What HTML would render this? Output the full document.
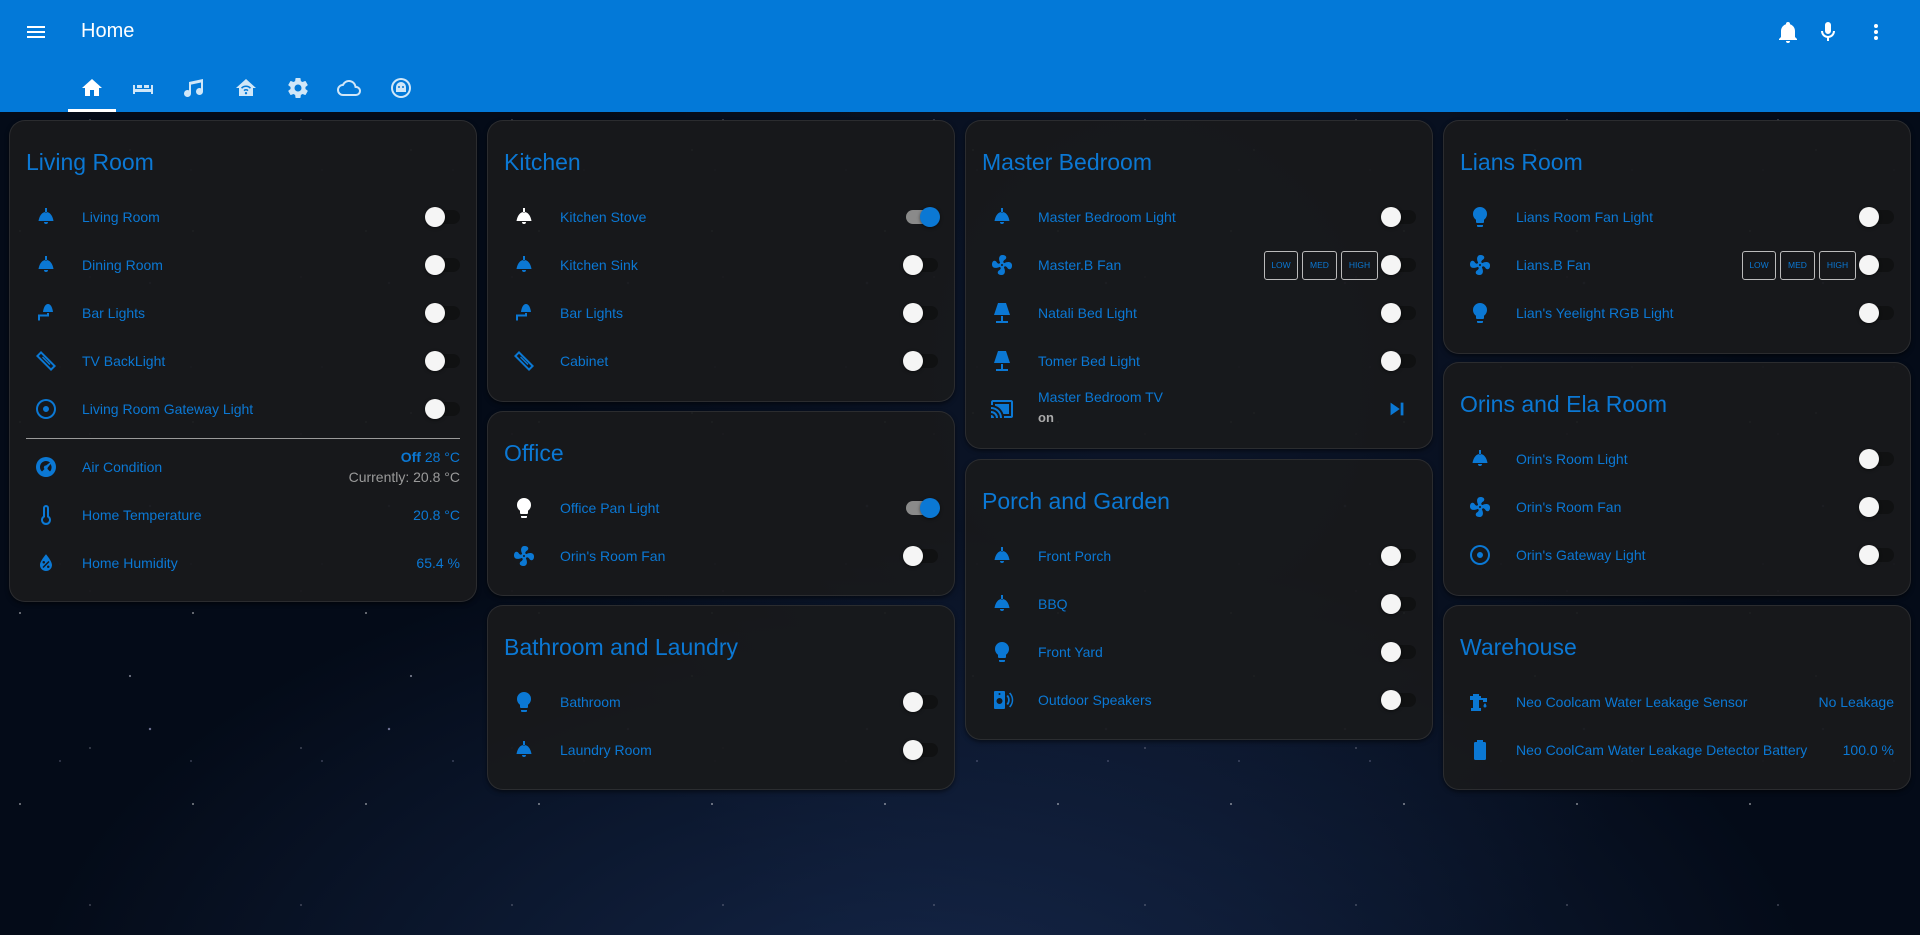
<!DOCTYPE html>
<html><head><meta charset="utf-8"><style>
*{box-sizing:border-box;margin:0;padding:0}
body{width:1920px;height:935px;overflow:hidden;font-family:"Liberation Sans",sans-serif;position:relative;
background:
radial-gradient(1.2px 1.2px at 20px 40px,#fff,transparent),
radial-gradient(1px 1px at 90px 120px,#aab,transparent),
radial-gradient(1.5px 1.5px at 150px 60px,#ccf,transparent),
radial-gradient(1px 1px at 60px 170px,#99b,transparent),
radial-gradient(1.3px 1.3px at 130px 150px,#eef,transparent),
radial-gradient(ellipse 900px 500px at 48% 110%,rgba(40,70,130,.45),transparent),
radial-gradient(ellipse 600px 700px at 60% 40%,rgba(30,45,80,.35),transparent),
#040b18;
background-size:173px 191px,211px 157px,239px 223px,131px 197px,281px 263px,100% 100%,100% 100%;}
.hdr{position:absolute;left:0;top:0;width:1920px;height:112px;background:#0379d8}
.hdr .t{position:absolute;left:81px;top:20px;color:#fff;font-size:20px}
.ic{position:absolute;fill:#fff}
.tab{position:absolute;top:76px;width:24px;height:24px;fill:rgba(255,255,255,.82)}
.ul{position:absolute;left:68px;top:109px;width:48px;height:3px;background:#fff}
.card{position:absolute;width:468px;background:rgba(24,25,27,.95);border:1px solid rgba(255,255,255,.09);border-radius:16px;box-shadow:0 2px 4px rgba(0,0,0,.5)}
.card h2{font-weight:normal;font-size:23px;color:#0b78d4;height:72px;line-height:82px;padding-left:16px}
.row{height:48px;position:relative;color:#0b78d4;font-size:14px}
.row svg{position:absolute;left:24px;top:12px;width:24px;height:24px;fill:#0b78d4}
.row .n{position:absolute;left:72px;top:0;line-height:48px;white-space:nowrap}
.row .v{position:absolute;right:16px;top:0;line-height:48px}
.tg{position:absolute;left:418px;top:17px;width:32px;height:14px;border-radius:7px;background:#101112}
.tg:after{content:"";position:absolute;left:-3px;top:-3px;width:20px;height:20px;border-radius:50%;background:#f5f5f5;box-shadow:0 1px 3px rgba(0,0,0,.5)}
.tg.on{background:#8a8a8a}.tg.on:after{left:14px;background:#0b78d4}
.fb{position:absolute;top:10px;height:29px;border:1px solid #bbb;border-radius:3px;font-size:8.5px;line-height:27px;text-align:center;color:#0b78d4}
.div{margin:5px 16px 4px;height:1px;background:#9a9a9a}
</style></head><body>
<div class="hdr">
<svg class="ic" style="left:24px;top:20px" width="24" height="24" viewBox="0 0 24 24"><path d="M3,6H21V8H3V6M3,11H21V13H3V11M3,16H21V18H3V16Z"/></svg>
<div class="t">Home</div>
<svg class="ic" style="left:1776px;top:20px" width="24" height="24" viewBox="0 0 24 24"><path d="M21,19V20H3V19L5,17V11C5,7.9 7.03,5.17 10,4.29C10,4.19 10,4.1 10,4A2,2 0 0,1 12,2A2,2 0 0,1 14,4C14,4.1 14,4.19 14,4.29C16.97,5.17 19,7.9 19,11V17L21,19M14,21A2,2 0 0,1 12,23A2,2 0 0,1 10,21"/></svg>
<svg class="ic" style="left:1816px;top:20px" width="24" height="24" viewBox="0 0 24 24"><path d="M12,2A3,3 0 0,1 15,5V11A3,3 0 0,1 12,14A3,3 0 0,1 9,11V5A3,3 0 0,1 12,2M19,11C19,14.53 16.39,17.44 13,17.930V21H11V17.93C7.61,17.44 5,14.53 5,11H7A5,5 0 0,0 12,16A5,5 0 0,0 17,11H19Z"/></svg>
<svg class="ic" style="left:1864px;top:20px" width="24" height="24" viewBox="0 0 24 24"><path d="M12,16A2,2 0 0,1 14,18A2,2 0 0,1 12,20A2,2 0 0,1 10,18A2,2 0 0,1 12,16M12,10A2,2 0 0,1 14,12A2,2 0 0,1 12,14A2,2 0 0,1 10,12A2,2 0 0,1 12,10M12,4A2,2 0 0,1 14,6A2,2 0 0,1 12,8A2,2 0 0,1 10,6A2,2 0 0,1 12,4Z"/></svg>
<svg class="tab" style="left:80px;fill:#fff" viewBox="0 0 24 24"><path d="M10,20V14H14V20H19V12H22L12,3L2,12H5V20H10Z"/></svg>
<svg class="tab" style="left:131px" viewBox="0 0 24 24"><path d="M2,9H4V13H20V9H22V18H20V16H4V18H2V9M6,9H11V12H6V9M13,9H18V12H13V9Z"/></svg>
<svg class="tab" style="left:182px" viewBox="0 0 24 24"><path d="M21,3V15.5A3.5,3.5 0 0,1 17.5,19A3.5,3.5 0 0,1 14,15.5A3.5,3.5 0 0,1 17.5,12C18.04,12 18.55,12.12 19,12.34V6.47L9,8.6V17.5A3.5,3.5 0 0,1 5.5,21A3.5,3.5 0 0,1 2,17.5A3.5,3.5 0 0,1 5.5,14C6.040,14 6.55,14.12 7,14.34V6L21,3Z"/></svg>
<svg class="tab" style="left:234px" viewBox="0 0 24 24"><path d="M12,3L2,12H5V20H19V12H22L12,3M12,9.5C14,9.5 15.8,10.3 17,11.6L15.9,12.7C14.9,11.6 13.5,11 12,11C10.5,11 9.1,11.6 8.1,12.7L7,11.6C8.2,10.3 10,9.5 12,9.5M12,13C13,13 13.9,13.4 14.5,14.1L13.4,15.2C13,14.8 12.5,14.5 12,14.5C11.5,14.5 11,14.8 10.6,15.2L9.5,14.1C10.1,13.4 11,13 12,13M12,16A1.2,1.2 0 0,1 13.2,17.2A1.2,1.2 0 0,1 12,18.4A1.2,1.2 0 0,1 10.8,17.2A1.2,1.2 0 0,1 12,16Z"/></svg>
<svg class="tab" style="left:286px" viewBox="0 0 24 24"><path d="M12,15.5A3.5,3.5 0 0,1 8.5,12A3.5,3.5 0 0,1 12,8.5A3.5,3.5 0 0,1 15.5,12A3.5,3.5 0 0,1 12,15.5M19.43,12.97C19.47,12.65 19.5,12.33 19.5,12C19.5,11.67 19.47,11.34 19.43,11L21.54,9.37C21.73,9.22 21.78,8.95 21.66,8.73L19.66,5.27C19.54,5.05 19.27,4.96 19.05,5.05L16.56,6.05C16.04,5.66 15.5,5.32 14.87,5.07L14.5,2.42C14.46,2.18 14.25,2 14,2H10C9.75,2 9.54,2.18 9.5,2.42L9.13,5.07C8.5,5.32 7.96,5.66 7.44,6.05L4.95,5.05C4.73,4.96 4.46,5.05 4.34,5.27L2.34,8.73C2.21,8.95 2.27,9.22 2.46,9.37L4.57,11C4.53,11.34 4.5,11.67 4.5,12C4.5,12.33 4.53,12.65 4.57,12.97L2.46,14.63C2.27,14.78 2.21,15.05 2.34,15.27L4.34,18.73C4.46,18.95 4.73,19.03 4.95,18.95L7.44,17.94C7.96,18.34 8.5,18.68 9.13,18.93L9.5,21.58C9.54,21.82 9.75,22 10,22H14C14.25,22 14.46,21.82 14.5,21.58L14.87,18.93C15.5,18.67 16.04,18.34 16.56,17.94L19.05,18.95C19.27,19.03 19.54,18.95 19.66,18.73L21.66,15.27C21.78,15.05 21.73,14.78 21.54,14.63L19.43,12.97Z"/></svg>
<svg class="tab" style="left:337px" viewBox="0 0 24 24"><path d="M19.35,10.03C18.67,6.59 15.64,4 12,4C9.11,4 6.6,5.64 5.35,8.03C2.34,8.36 0,10.9 0,14A6,6 0 0,0 6,20H19A5,5 0 0,0 24,15C24,12.36 21.95,10.22 19.35,10.03M19,18H6A4,4 0 0,1 2,14C2,11.95 3.53,10.24 5.56,10.03L6.63,9.92L7.13,8.97C8.08,7.14 9.94,6 12,6C14.62,6 16.88,7.86 17.39,10.43L17.69,11.93L19.22,12.04C20.78,12.14 22,13.45 22,15A3,3 0 0,1 19,18Z"/></svg>
<svg class="tab" style="left:389px" viewBox="0 0 24 24"><path d="M12,2A10,10 0 0,1 22,12A10,10 0 0,1 12,22A10,10 0 0,1 2,12A10,10 0 0,1 12,2M12,4A8,8 0 0,0 4,12A8,8 0 0,0 12,20A8,8 0 0,0 20,12A8,8 0 0,0 12,4M12,6A5,5 0 0,1 17,11V16H7V11A5,5 0 0,1 12,6M10,10A1,1 0 0,0 9,11A1,1 0 0,0 10,12A1,1 0 0,0 11,11A1,1 0 0,0 10,10M14,10A1,1 0 0,0 13,11A1,1 0 0,0 14,12A1,1 0 0,0 15,11A1,1 0 0,0 14,10Z"/></svg>
<div class="ul"></div>
</div>

<svg width="0" height="0" style="position:absolute"><defs>
<symbol id="cl" viewBox="0 0 24 24"><path d="M11,3H13V7.5H11Z M12,7C8,7 5.5,10.5 4.5,16H19.5C18.5,10.5 16,7 12,7Z M10,17H14A2,2 0 0,1 10,17Z"/></symbol>
<symbol id="wl" viewBox="0 0 24 24"><path d="M14,3C11,3 9.5,7 9,11H19C18.5,7 17,3 14,3Z M13,12H15V15.5H6V19.5H4V13.5H6V13.5H13Z"/></symbol>
<symbol id="strip" viewBox="0 0 24 24"><path d="M7,2L22,17L17,22L2,7L7,2M7,4.8L4.8,7L17,19.2L19.2,17L7,4.8M8,8.5L9,7.5L16.5,15L15.5,16Z"/></symbol>
<symbol id="gw" viewBox="0 0 24 24"><path d="M12,2A10,10 0 0,1 22,12A10,10 0 0,1 12,22A10,10 0 0,1 2,12A10,10 0 0,1 12,2M12,4A8,8 0 0,0 4,12A8,8 0 0,0 12,20A8,8 0 0,0 20,12A8,8 0 0,0 12,4M12,9A3,3 0 0,1 15,12A3,3 0 0,1 12,15A3,3 0 0,1 9,12A3,3 0 0,1 12,9Z"/></symbol>
<symbol id="ac" viewBox="0 0 24 24"><path d="M12,2A10,10 0 0,1 22,12A10,10 0 0,1 12,22A10,10 0 0,1 2,12A10,10 0 0,1 12,2M12,6A6,6 0 0,0 6,12A6,6 0 0,0 8,16.5L10.5,14A2,2 0 0,1 12,10.5L16,7.5A6,6 0 0,0 12,6M16.5,9L13.5,13A2,2 0 0,1 13.5,14L16,16.5A6,6 0 0,0 16.5,9Z"/></symbol>
<symbol id="th" viewBox="0 0 24 24"><path d="M15,13V5A3,3 0 0,0 9,5V13A5,5 0 1,0 15,13M12,4A1,1 0 0,1 13,5V14.1A3,3 0 1,1 11,14.1V5A1,1 0 0,1 12,4Z"/></symbol>
<symbol id="hu" viewBox="0 0 24 24"><path d="M12,3.25C12,3.25 6,10 6,14C6,17.32 8.69,20 12,20A6,6 0 0,0 18,14C18,10 12,3.25 12,3.25M14.47,9.97L15.53,11.03L9.53,17.03L8.47,15.97M9.75,10A1.25,1.25 0 0,1 11,11.25A1.25,1.25 0 0,1 9.75,12.5A1.25,1.25 0 0,1 8.5,11.25A1.25,1.25 0 0,1 9.75,10M14.25,14.5A1.25,1.25 0 0,1 15.5,15.75A1.25,1.25 0 0,1 14.25,17A1.25,1.25 0 0,1 13,15.75A1.25,1.25 0 0,1 14.25,14.5Z"/></symbol>
<symbol id="fan" viewBox="0 0 24 24"><path d="M12,11A1,1 0 0,0 11,12A1,1 0 0,0 12,13A1,1 0 0,0 13,12A1,1 0 0,0 12,11M12.5,2C17,2 17.11,5.57 14.75,6.75C13.76,7.24 13.32,8.29 13.13,9.22C13.61,9.42 14.03,9.73 14.35,10.13C18.05,8.13 22.03,8.92 22.03,12.5C22.03,17 18.46,17.1 17.28,14.73C16.78,13.74 15.72,13.3 14.79,13.11C14.59,13.59 14.28,14 13.88,14.34C15.87,18.03 15.08,22 11.5,22C7,22 6.91,18.42 9.27,17.24C10.25,16.75 10.69,15.71 10.89,14.79C10.4,14.59 9.97,14.27 9.65,13.87C5.96,15.85 2,15.07 2,11.5C2,7 5.56,6.89 6.74,9.26C7.24,10.25 8.29,10.68 9.22,10.87C9.41,10.39 9.73,9.97 10.14,9.65C8.15,5.96 8.94,2 12.5,2Z"/></symbol>
<symbol id="bulb" viewBox="0 0 24 24"><path d="M12,2A7,7 0 0,0 5,9C5,11.38 6.19,13.47 8,14.74V17A1,1 0 0,0 9,18H15A1,1 0 0,0 16,17V14.74C17.81,13.47 19,11.38 19,9A7,7 0 0,0 12,2M9,21A1,1 0 0,0 10,22H14A1,1 0 0,0 15,21V20H9V21Z"/></symbol>
<symbol id="lamp" viewBox="0 0 24 24"><path d="M8,2H16L20,14H4L8,2M11,15H13V20H18V22H6V20H11V15Z"/></symbol>
<symbol id="cast" viewBox="0 0 24 24"><path d="M21,3H3C1.9,3 1,3.9 1,5V8H3V5H21V19H14V21H21A2,2 0 0,0 23,19V5C23,3.9 22.1,3 21,3M1,10V12A9,9 0 0,1 10,21H12C12,14.92 7.07,10 1,10M19,7H5V8.63C8.96,9.91 12.09,13.04 13.37,17H19M1,14V16A5,5 0 0,1 6,21H8A7,7 0 0,0 1,14M1,18V21H4A3,3 0 0,0 1,18Z"/></symbol>
<symbol id="spk" viewBox="0 0 24 24"><path d="M5,3H14A1,1 0 0,1 15,4V20A1,1 0 0,1 14,21H5A1,1 0 0,1 4,20V4A1,1 0 0,1 5,3M9.5,5A1,1 0 0,0 8.5,6A1,1 0 0,0 9.5,7A1,1 0 0,0 10.5,6A1,1 0 0,0 9.5,5M9.5,10A3,3 0 0,0 6.5,13A3,3 0 0,0 9.5,16A3,3 0 0,0 12.5,13A3,3 0 0,0 9.5,10M16.5,8L18,7A8,8 0 0,1 18,17L16.5,16A6,6 0 0,0 16.5,8M19,5.5L20.3,4.5A11,11 0 0,1 20.3,19.5L19,18.5A9,9 0 0,0 19,5.5Z"/></symbol>
<symbol id="pipe" viewBox="0 0 24 24"><path d="M5,4H11V6H13V8H19V12H15V10H11V18H13V21H3V18H5V10H2V6H5Z M17,13C17,13 18.5,15 18.5,16A1.5,1.5 0 0,1 15.5,16C15.5,15 17,13 17,13Z"/></symbol>
<symbol id="bat" viewBox="0 0 24 24"><path d="M16.67,4H15V2H9V4H7.33A1.33,1.33 0 0,0 6,5.33V20.67C6,21.4 6.6,22 7.33,22H16.67A1.33,1.33 0 0,0 18,20.67V5.33C18,4.6 17.4,4 16.67,4Z"/></symbol>
</defs></svg>

<!-- Col 1 -->
<div class="card" style="left:9px;top:120px;height:482px">
<h2>Living Room</h2>
<div class="row"><svg><use href="#cl"/></svg><span class="n">Living Room</span><div class="tg"></div></div>
<div class="row"><svg><use href="#cl"/></svg><span class="n">Dining Room</span><div class="tg"></div></div>
<div class="row"><svg><use href="#wl"/></svg><span class="n">Bar Lights</span><div class="tg"></div></div>
<div class="row"><svg><use href="#strip"/></svg><span class="n">TV BackLight</span><div class="tg"></div></div>
<div class="row"><svg><use href="#gw"/></svg><span class="n">Living Room Gateway Light</span><div class="tg"></div></div>
<div class="div"></div>
<div class="row"><svg><use href="#ac"/></svg><span class="n">Air Condition</span><div style="position:absolute;right:16px;top:4px;text-align:right;line-height:20px"><b>Off</b> 28 °C<br><span style="color:#9a9a9a">Currently: 20.8 °C</span></div></div>
<div class="row"><svg><use href="#th"/></svg><span class="n">Home Temperature</span><span class="v">20.8 °C</span></div>
<div class="row"><svg><use href="#hu"/></svg><span class="n">Home Humidity</span><span class="v">65.4 %</span></div>
</div>

<!-- Col 2 -->
<div class="card" style="left:487px;top:120px;height:282px">
<h2>Kitchen</h2>
<div class="row"><svg style="fill:#fff"><use href="#cl"/></svg><span class="n">Kitchen Stove</span><div class="tg on"></div></div>
<div class="row"><svg><use href="#cl"/></svg><span class="n">Kitchen Sink</span><div class="tg"></div></div>
<div class="row"><svg><use href="#wl"/></svg><span class="n">Bar Lights</span><div class="tg"></div></div>
<div class="row"><svg><use href="#strip"/></svg><span class="n">Cabinet</span><div class="tg"></div></div>
</div>
<div class="card" style="left:487px;top:411px;height:185px">
<h2>Office</h2>
<div class="row"><svg style="fill:#fff"><use href="#bulb"/></svg><span class="n">Office Pan Light</span><div class="tg on"></div></div>
<div class="row"><svg><use href="#fan"/></svg><span class="n">Orin's Room Fan</span><div class="tg"></div></div>
</div>
<div class="card" style="left:487px;top:605px;height:185px">
<h2>Bathroom and Laundry</h2>
<div class="row"><svg><use href="#bulb"/></svg><span class="n">Bathroom</span><div class="tg"></div></div>
<div class="row"><svg><use href="#cl"/></svg><span class="n">Laundry Room</span><div class="tg"></div></div>
</div>

<!-- Col 3 -->
<div class="card" style="left:965px;top:120px;height:329px">
<h2>Master Bedroom</h2>
<div class="row"><svg><use href="#cl"/></svg><span class="n">Master Bedroom Light</span><div class="tg"></div></div>
<div class="row"><svg><use href="#fan"/></svg><span class="n">Master.B Fan</span><div class="fb" style="left:298px;width:34px">LOW</div><div class="fb" style="left:336px;width:35px">MED</div><div class="fb" style="left:375px;width:37px">HIGH</div><div class="tg"></div></div>
<div class="row"><svg><use href="#lamp"/></svg><span class="n">Natali Bed Light</span><div class="tg"></div></div>
<div class="row"><svg><use href="#lamp"/></svg><span class="n">Tomer Bed Light</span><div class="tg"></div></div>
<div class="row"><svg><use href="#cast"/></svg><span class="n" style="line-height:20px;top:2px">Master Bedroom TV<br><b style="color:#aaa;font-size:13px">on</b></span>
<svg style="left:420px;width:22px;height:22px;top:13px" viewBox="0 0 24 24"><path d="M5,5V19L15,12L5,5M16,5V19H19V5H16Z"/></svg></div>
</div>
<div class="card" style="left:965px;top:459px;height:281px">
<h2>Porch and Garden</h2>
<div class="row"><svg><use href="#cl"/></svg><span class="n">Front Porch</span><div class="tg"></div></div>
<div class="row"><svg><use href="#cl"/></svg><span class="n">BBQ</span><div class="tg"></div></div>
<div class="row"><svg><use href="#bulb"/></svg><span class="n">Front Yard</span><div class="tg"></div></div>
<div class="row"><svg><use href="#spk"/></svg><span class="n">Outdoor Speakers</span><div class="tg"></div></div>
</div>

<!-- Col 4 -->
<div class="card" style="left:1443px;top:120px;height:234px">
<h2>Lians Room</h2>
<div class="row"><svg><use href="#bulb"/></svg><span class="n">Lians Room Fan Light</span><div class="tg"></div></div>
<div class="row"><svg><use href="#fan"/></svg><span class="n">Lians.B Fan</span><div class="fb" style="left:298px;width:34px">LOW</div><div class="fb" style="left:336px;width:35px">MED</div><div class="fb" style="left:375px;width:37px">HIGH</div><div class="tg"></div></div>
<div class="row"><svg><use href="#bulb"/></svg><span class="n">Lian's Yeelight RGB Light</span><div class="tg"></div></div>
</div>
<div class="card" style="left:1443px;top:362px;height:234px">
<h2>Orins and Ela Room</h2>
<div class="row"><svg><use href="#cl"/></svg><span class="n">Orin's Room Light</span><div class="tg"></div></div>
<div class="row"><svg><use href="#fan"/></svg><span class="n">Orin's Room Fan</span><div class="tg"></div></div>
<div class="row"><svg><use href="#gw"/></svg><span class="n">Orin's Gateway Light</span><div class="tg"></div></div>
</div>
<div class="card" style="left:1443px;top:605px;height:185px">
<h2>Warehouse</h2>
<div class="row"><svg><use href="#pipe"/></svg><span class="n">Neo Coolcam Water Leakage Sensor</span><span class="v">No Leakage</span></div>
<div class="row"><svg><use href="#bat"/></svg><span class="n">Neo CoolCam Water Leakage Detector Battery</span><span class="v">100.0 %</span></div>
</div>
</body></html>
